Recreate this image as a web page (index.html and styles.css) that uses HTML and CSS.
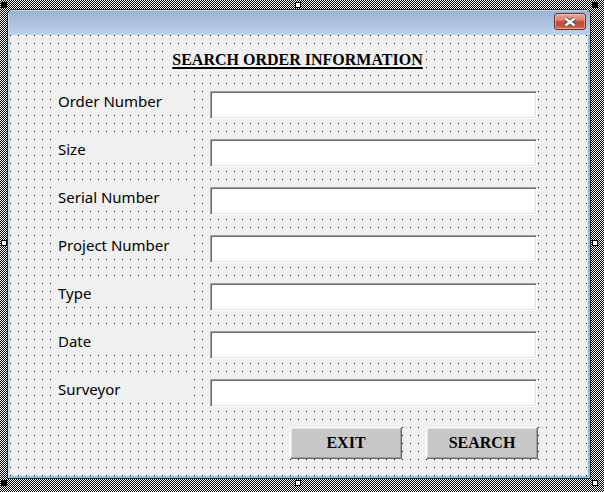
FILE: index.html
```html
<!DOCTYPE html>
<html>
<head>
<meta charset="utf-8">
<link rel="stylesheet" href="styles.css">
</head>
<body>
<div class="designer">
  <div class="window">
    <div class="titlebar">
      <div class="close-btn">
        <svg width="12" height="10" viewBox="0 0 12 10">
          <path d="M1.5 1.5 L10.5 8.5 M10.5 1.5 L1.5 8.5" stroke="#4a4a4a" stroke-width="4.2" fill="none"/>
          <path d="M1.5 1.5 L10.5 8.5 M10.5 1.5 L1.5 8.5" stroke="#ffffff" stroke-width="2.4" fill="none"/>
        </svg>
      </div>
    </div>
    <div class="client">
      <div class="heading-row"><span class="heading">SEARCH ORDER INFORMATION</span></div>
      <div class="fields">
        <div class="field"><span class="label">Order Number</span><span class="textbox"></span></div>
        <div class="field"><span class="label">Size</span><span class="textbox"></span></div>
        <div class="field"><span class="label">Serial Number</span><span class="textbox"></span></div>
        <div class="field"><span class="label">Project Number</span><span class="textbox"></span></div>
        <div class="field"><span class="label">Type</span><span class="textbox"></span></div>
        <div class="field"><span class="label">Date</span><span class="textbox"></span></div>
        <div class="field"><span class="label">Surveyor</span><span class="textbox"></span></div>
      </div>
      <div class="buttons">
        <span class="btn">EXIT</span>
        <span class="btn">SEARCH</span>
      </div>
    </div>
  </div>
  <span class="handle solid h-tl"></span>
  <span class="handle h-tm"></span>
  <span class="handle solid h-tr"></span>
  <span class="handle h-ml"></span>
  <span class="handle h-mr"></span>
  <span class="handle solid h-bl"></span>
  <span class="handle h-bm"></span>
  <span class="handle h-br"></span>
</div>
</body>
</html>
```
FILE: styles.css
```css
html, body {
  margin: 0;
  padding: 0;
  background: #ffffff;
}

.designer {
  position: relative;
  width: 604px;
  height: 492px;
  box-sizing: border-box;
  padding: 9px 13px 13px 7px;
  background: repeating-conic-gradient(#000 0 25%, #fff 0 50%) 0 0 / 2px 2px;
}

.window {
  width: 584px;
  height: 470px;
  box-sizing: border-box;
  border: 1px solid #2a2a2a;
  border-radius: 6px 6px 0 0;
  background: #f0f0f0;
  display: flex;
  flex-direction: column;
  overflow: hidden;
}

.titlebar {
  height: 25px;
  flex: none;
  background: linear-gradient(#9ab3d3 0%, #a8c0dd 45%, #bcd3ed 100%);
  box-shadow: inset 1px 1px 0 #c9d9ec;
  display: flex;
  justify-content: flex-end;
  align-items: flex-start;
  padding: 3px 4px 0 0;
  box-sizing: border-box;
}

.close-btn {
  width: 32px;
  height: 17px;
  box-sizing: border-box;
  border: 1px solid #6b2f2f;
  border-radius: 3px;
  background: linear-gradient(#e8a99b 0%, #d98373 40%, #c44b36 52%, #c2533c 80%, #d37a5e 100%);
  box-shadow: inset 0 0 0 1px rgba(255, 220, 210, 0.45);
  display: flex;
  align-items: center;
  justify-content: center;
}

.close-btn svg {
  display: block;
}

.client {
  flex: 1;
  border-left: 2px solid #c6dbf0;
  border-right: 2px solid #7cc3e6;
  border-bottom: 2px solid #7cc3e6;
  background-color: #f0f0f0;
  background-image: conic-gradient(from 270deg at 1px 1px, #000 90deg, #f0f0f0 0);
  background-size: 8px 8px;
  background-position: 0 0;
  display: flex;
  flex-direction: column;
}

.heading-row {
  display: flex;
  justify-content: center;
  margin-top: 12px;
  padding-right: 3px;
}

.heading {
  display: block;
  height: 24px;
  box-sizing: border-box;
  padding: 2px 3px 0 3px;
  line-height: 22px;
  background: #f0f0f0;
  font-family: "Liberation Serif", "Times New Roman", serif;
  font-weight: bold;
  font-size: 16px;
  color: #000;
  text-decoration: underline;
  text-decoration-thickness: 2px;
  text-underline-offset: 2px;
}

.fields {
  margin-top: 20px;
  padding-left: 42px;
  display: flex;
  flex-direction: column;
  gap: 20px;
}

.field {
  height: 28px;
  display: flex;
  align-items: flex-start;
}

.label {
  width: 141px;
  height: 25px;
  margin-top: -4px;
  margin-right: 17px;
  box-sizing: border-box;
  padding: 3px 0 0 6px;
  line-height: 22px;
  background: #f0f0f0;
  font-family: "Noto Sans", "Open Sans", sans-serif;
  font-size: 15px;
  color: #000;
  white-space: nowrap;
}

.textbox {
  width: 327px;
  height: 28px;
  box-sizing: border-box;
  background: #fff;
  border-style: solid;
  border-width: 1px;
  border-color: #a0a0a0 #ffffff #ffffff #a0a0a0;
  box-shadow: inset 1px 1px 0 #696969, inset -1px -1px 0 #e3e3e3;
}

.buttons {
  margin-top: 20px;
  padding-left: 280px;
  display: flex;
  gap: 24px;
}

.btn {
  width: 112px;
  height: 32px;
  box-sizing: border-box;
  background: #c8c8c8;
  border-style: solid;
  border-width: 1px;
  border-color: #ffffff #696969 #696969 #ffffff;
  box-shadow: inset -1px -1px 0 #a0a0a0, inset 1px 1px 0 #e3e3e3;
  font-family: "Liberation Serif", "Times New Roman", serif;
  font-weight: bold;
  font-size: 16px;
  line-height: 30px;
  text-align: center;
  color: #000;
}

.handle {
  position: absolute;
  width: 6px;
  height: 6px;
  box-sizing: border-box;
  background: #fff;
  border: 1px solid #000;
}

.handle.solid {
  background: #000;
}

.h-tl { left: 1px; top: 2px; }
.h-tm { left: 295px; top: 2px; }
.h-tr { left: 592px; top: 2px; }
.h-ml { left: 1px; top: 240px; }
.h-mr { left: 592px; top: 240px; }
.h-bl { left: 1px; top: 480px; }
.h-bm { left: 295px; top: 480px; }
.h-br { left: 592px; top: 480px; }
```
